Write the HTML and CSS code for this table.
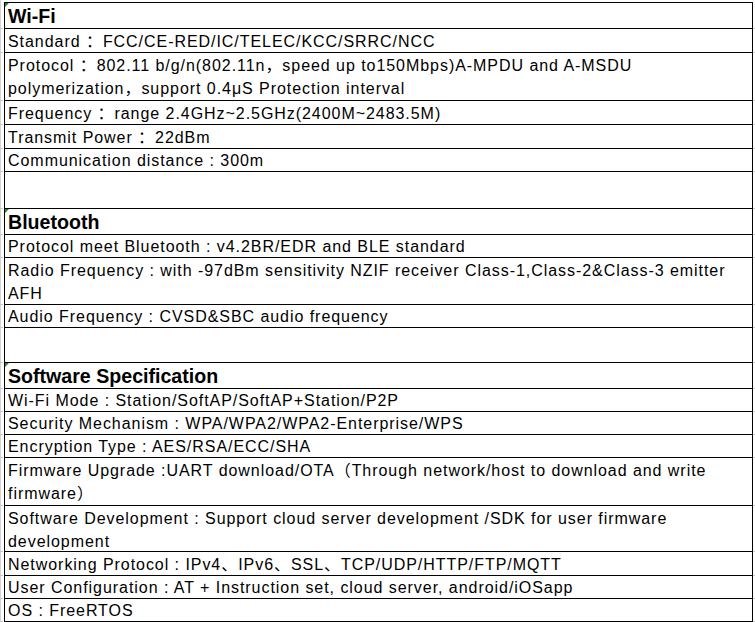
FILE: index.html
```html
<!DOCTYPE html>
<html>
<head>
<meta charset="utf-8">
<link rel="stylesheet" href="styles.css">
</head>
<body>
<div class="sheet">
  <div class="table">
    <div class="row head h26"><span class="tri"></span>Wi-Fi</div>
    <div class="row h24">Standard ：FCC/CE-RED/IC/TELEC/KCC/SRRC/NCC</div>
    <div class="row wrap h48">Protocol ：802.11 b/g/n(802.11n，speed up to150Mbps)A-MPDU and A-MSDU polymerization，support 0.4μS Protection interval</div>
    <div class="row h24">Frequency ：range 2.4GHz~2.5GHz(2400M~2483.5M)</div>
    <div class="row h24">Transmit Power ：22dBm</div>
    <div class="row h23">Communication distance : 300m</div>
    <div class="row empty h37"></div>

    <div class="row head h26"><span class="tri"></span>Bluetooth</div>
    <div class="row h23">Protocol meet Bluetooth : v4.2BR/EDR and BLE standard</div>
    <div class="row wrap h47">Radio Frequency : with -97dBm sensitivity NZIF receiver Class-1,Class-2&amp;Class-3 emitter AFH</div>
    <div class="row h23">Audio Frequency : CVSD&amp;SBC audio frequency</div>
    <div class="row empty h35"></div>

    <div class="row head h26"><span class="tri"></span>Software Specification</div>
    <div class="row h23">Wi-Fi Mode : Station/SoftAP/SoftAP+Station/P2P</div>
    <div class="row h23">Security Mechanism : WPA/WPA2/WPA2-Enterprise/WPS</div>
    <div class="row h23">Encryption Type : AES/RSA/ECC/SHA</div>
    <div class="row wrap h48">Firmware Upgrade :UART download/OTA（Through network/host to download and write firmware）</div>
    <div class="row wrap h46">Software Development : Support cloud server development /SDK for user firmware development</div>
    <div class="row h24">Networking Protocol : IPv4、IPv6、SSL、TCP/UDP/HTTP/FTP/MQTT</div>
    <div class="row h23">User Configuration : AT + Instruction set, cloud server, android/iOSapp</div>
    <div class="row h23">OS : FreeRTOS</div>
  </div>
</div>
</body>
</html>
```
FILE: styles.css
```css
html, body {
  margin: 0;
  padding: 0;
  background: #ffffff;
}

body {
  font-family: "Liberation Sans", Arial, "Noto Sans CJK SC", sans-serif;
  font-size: 16px;
  letter-spacing: 0.95px;
  color: #000000;
}

.sheet {
  width: 755px;
  height: 622px;
  box-sizing: border-box;
  padding: 2px 0 0 4px;
  background:
    linear-gradient(#d4d4d4, #d4d4d4) 0 0 / 1px 100% no-repeat;
}

.table {
  width: 749px;
  box-sizing: border-box;
  border-top: 1px solid #000;
  border-left: 1px solid #000;
  border-right: 1px solid #000;
}

.row {
  position: relative;
  box-sizing: border-box;
  border-bottom: 1px solid #000;
  display: flex;
  align-items: flex-end;
  padding: 0 2px 1px 3px;
  line-height: 18px;
}

.row::before,
.row::after {
  content: "";
  position: absolute;
  bottom: -1px;
  width: 3px;
  height: 1px;
  background: #c8c8c8;
}

.row::before {
  left: -5px;
}

.row::after {
  right: -4px;
}

.wrap {
  display: block;
  padding-top: 1px;
  line-height: 23px;
}

.head {
  font-weight: bold;
  font-size: 19.6px;
  letter-spacing: 0;
  line-height: 22px;
  padding-bottom: 1px;
}

.tri {
  position: absolute;
  left: 0;
  top: 0;
  width: 0;
  height: 0;
  border-top: 4px solid #1f8a3a;
  border-right: 4px solid transparent;
}

.h23 { height: 23px; }
.h24 { height: 24px; }
.h26 { height: 26px; }
.h35 { height: 35px; }
.h37 { height: 37px; }
.h46 { height: 46px; }
.h47 { height: 47px; }
.h48 { height: 48px; }
```
